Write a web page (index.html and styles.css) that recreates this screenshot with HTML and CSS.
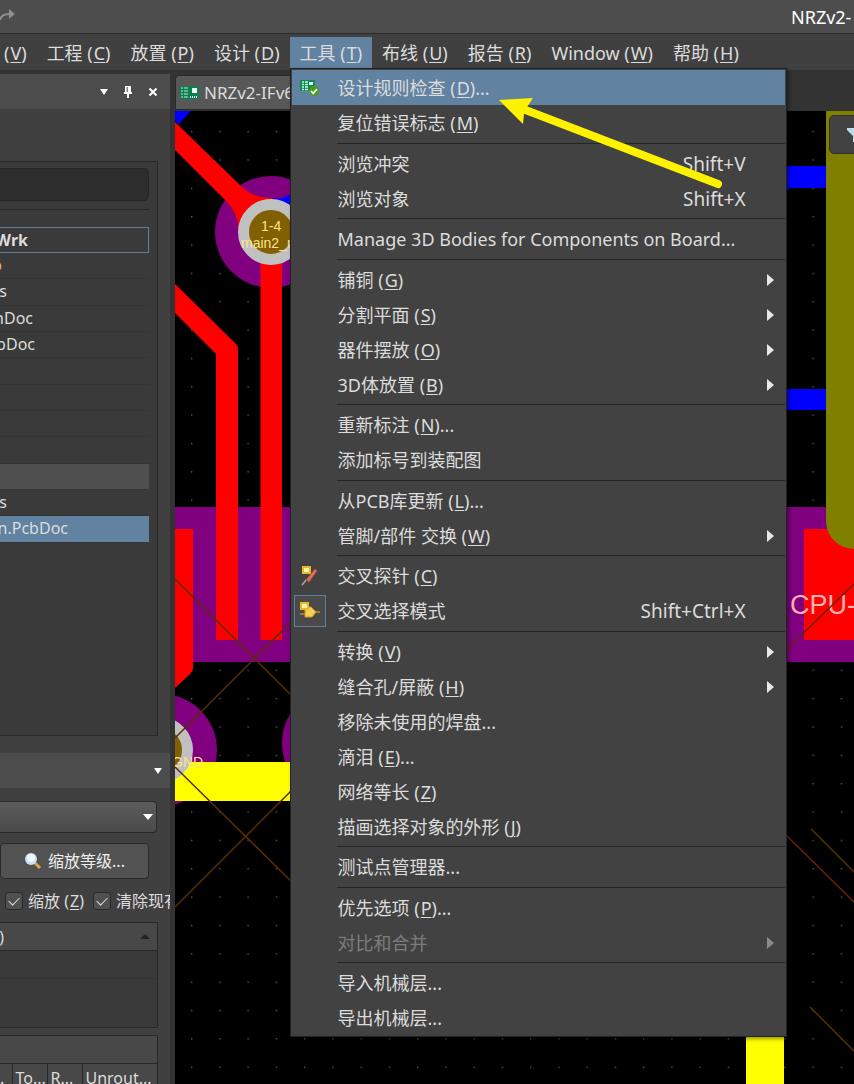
FILE: index.html
```html
<!DOCTYPE html>
<html lang="zh-CN">
<head>
<meta charset="utf-8">
<title>NRZv2-IFv6</title>
<link rel="stylesheet" href="styles.css">
</head>
<body>
<div class="app">
  <header class="titlebar">
    <svg class="redo" width="16" height="22" viewBox="0 0 16 22" fill="none" stroke="#8e8e8e" stroke-width="2"><path d="M0 20C1 15 5 14 10 14"/><path d="M9 9l6 5-6 5z" fill="#8e8e8e" stroke="none"/></svg>
    <span class="title">NRZv2-</span>
  </header>
  <nav class="menubar">
    <button class="top first">(<u>V</u>)</button>
    <button class="top">工程 (<u>C</u>)</button>
    <button class="top">放置 (<u>P</u>)</button>
    <button class="top">设计 (<u>D</u>)</button>
    <div class="open">
      <button class="top active">工具 (<u>T</u>)</button>
      <div class="menu">
        <div class="group">
          <button class="item hot"><span class="ico"><svg width="20" height="18" viewBox="0 0 20 18"><path d="M0 1h15v11H0z" fill="#0d8a56"/><path d="M2 3h2M2 5.500h2M2 8h2M2 10.500h2M5 3h3M5 5.500h3M5 8h3M5 10.500h3" stroke="#c9f0dc" stroke-width="1.300"/><path d="M9 3h4v3H9z" fill="#e8f6ee"/><circle cx="14" cy="12" r="5" fill="#4a9a1c"/><path d="M11 12l2.200 2.300L17 10" fill="none" stroke="#fff" stroke-width="1.800"/></svg></span><span>设计规则检查 (<u>D</u>)...</span></button>
          <button class="item"><span class="ico"></span><span>复位错误标志 (<u>M</u>)</span></button>
        </div>
        <div class="group">
          <button class="item"><span class="ico"></span><span>浏览冲突</span><kbd>Shift+V</kbd></button>
          <button class="item"><span class="ico"></span><span>浏览对象</span><kbd>Shift+X</kbd></button>
        </div>
        <div class="group">
          <button class="item"><span class="ico"></span><span>Manage 3D Bodies for Components on Board...</span></button>
        </div>
        <div class="group">
          <button class="item sub"><span class="ico"></span><span>铺铜 (<u>G</u>)</span></button>
          <button class="item sub"><span class="ico"></span><span>分割平面 (<u>S</u>)</span></button>
          <button class="item sub"><span class="ico"></span><span>器件摆放 (<u>O</u>)</span></button>
          <button class="item sub"><span class="ico"></span><span>3D体放置 (<u>B</u>)</span></button>
        </div>
        <div class="group">
          <button class="item"><span class="ico"></span><span>重新标注 (<u>N</u>)...</span></button>
          <button class="item"><span class="ico"></span><span>添加标号到装配图</span></button>
        </div>
        <div class="group">
          <button class="item"><span class="ico"></span><span>从PCB库更新 (<u>L</u>)...</span></button>
          <button class="item sub"><span class="ico"></span><span>管脚/部件 交换 (<u>W</u>)</span></button>
        </div>
        <div class="group">
          <button class="item"><span class="ico"><svg width="20" height="22" viewBox="0 0 20 22"><path d="M2 20l5-6" stroke="#aaa" stroke-width="1.500"/><path d="M6 15L15 4l2 2-8 11z" fill="#e0705e" stroke="#b04a3c"/><path d="M2 1h9v8H2z" fill="#e5b92c"/><path d="M4 3h5v4H4z" fill="#fff3a8"/></svg></span><span>交叉探针 (<u>C</u>)</span></button>
          <button class="item" aria-pressed="true"><span class="ico checked"><svg width="22" height="20" viewBox="0 0 22 20"><path d="M1 13h5M14 11h7" stroke="#c48c1c" stroke-width="1.500"/><path d="M6 6h6l5 5-4 5H6z" fill="#f5cf55" stroke="#c99a26"/><path d="M1 1h9v8H1z" fill="#e5b92c"/><path d="M3 3h5v4H3z" fill="#fff3a8"/></svg></span><span>交叉选择模式</span><kbd>Shift+Ctrl+X</kbd></button>
        </div>
        <div class="group">
          <button class="item sub"><span class="ico"></span><span>转换 (<u>V</u>)</span></button>
          <button class="item sub"><span class="ico"></span><span>缝合孔/屏蔽 (<u>H</u>)</span></button>
          <button class="item"><span class="ico"></span><span>移除未使用的焊盘...</span></button>
          <button class="item"><span class="ico"></span><span>滴泪 (<u>E</u>)...</span></button>
          <button class="item"><span class="ico"></span><span>网络等长 (<u>Z</u>)</span></button>
          <button class="item"><span class="ico"></span><span>描画选择对象的外形 (<u>J</u>)</span></button>
        </div>
        <div class="group">
          <button class="item"><span class="ico"></span><span>测试点管理器...</span></button>
        </div>
        <div class="group">
          <button class="item"><span class="ico"></span><span>优先选项 (<u>P</u>)...</span></button>
          <button class="item sub" disabled><span class="ico"></span><span>对比和合并</span></button>
        </div>
        <div class="group">
          <button class="item"><span class="ico"></span><span>导入机械层...</span></button>
          <button class="item"><span class="ico"></span><span>导出机械层...</span></button>
        </div>
        <svg class="pointer" width="230" height="100" viewBox="0 0 230 100"><path d="M5 11l34-2-6 9-3 7-1 10z" fill="#fff200"/><path d="M29 20L224 95" stroke="#fff200" stroke-width="8" stroke-linecap="round"/></svg>
      </div>
    </div>
    <button class="top">布线 (<u>U</u>)</button>
    <button class="top">报告 (<u>R</u>)</button>
    <button class="top">Window (<u>W</u>)</button>
    <button class="top">帮助 (<u>H</u>)</button>
  </nav>

  <div class="work">
    <aside class="side">
      <div class="strip">
        <svg width="8" height="6" viewBox="0 0 8 6"><path d="M0 0h8L4 6z" fill="#fff"/></svg>
        <svg width="10" height="12" viewBox="0 0 10 12"><path d="M2 0h6v6h1v2H1V6h1zM4 8h2v4H4z" fill="#fff"/><path d="M3.500 1h1.500v5H3.500z" fill="#888"/></svg>
        <svg width="10" height="10" viewBox="0 0 10 10"><path d="M1.500 1.500l7 7M8.500 1.500l-7 7" stroke="#fff" stroke-width="2"/></svg>
      </div>
      <div class="tree">
        <input class="search" type="text" aria-label="搜索">
        <ul class="rows">
          <li class="focus"><span class="cut c28">Wrk</span></li>
          <li class="orange"><span class="cut c2">o</span></li>
          <li><span class="cut c7">s</span></li>
          <li><span class="cut c33">nDoc</span></li>
          <li><span class="cut c35">bDoc</span></li>
          <li></li><li></li><li></li><li></li>
        </ul>
        <ul class="rows">
          <li class="section"></li>
          <li><span class="cut c7">s</span></li>
          <li class="selected"><span class="cut c68">n.PcbDoc</span></li>
        </ul>
      </div>
      <div class="strip low">
        <svg width="8" height="6" viewBox="0 0 8 6"><path d="M0 0h8L4 6z" fill="#fff"/></svg>
      </div>
      <div class="combo">
        <select aria-label="对象"><option></option></select>
        <svg width="10" height="6" viewBox="0 0 10 6"><path d="M0 0h10L5 6z" fill="#fff"/></svg>
      </div>
      <button class="zoom"><svg width="18" height="18" viewBox="0 0 18 18"><path d="M10 10l6 6" stroke="#e0a050" stroke-width="3"/><circle cx="7" cy="7" r="6" fill="#c5e0fa"/><circle cx="7" cy="6" r="4" fill="#f2f8ff"/></svg>缩放等级...</button>
      <div class="checks">
        <label><input type="checkbox" checked><span>缩放 (<u>Z</u>)</span></label>
        <label><input type="checkbox" checked>清除现有</label>
      </div>
      <div class="list">
        <div class="head"><span class="cut c4">)</span><svg width="10" height="5" viewBox="0 0 10 5"><path d="M0 5h10L5 0z" fill="#222"/></svg></div>
        <div class="line"></div>
      </div>
      <div class="list last">
        <div class="head"></div>
        <table><tr><th class="n1">.</th><th class="n2">To...</th><th class="n3">R...</th><th>Unrout...</th></tr></table>
      </div>
    </aside>
    <main class="doc">
      <div class="tabs"><button class="tab"><svg width="20" height="16" viewBox="0 0 20 16"><path d="M0 1h19v13H0z" fill="#0c7f50"/><path d="M1 3h2M1 6h2M1 9h2M1 12h2M4 3h4M4 6h4M4 9h4M4 12h4" stroke="#bfe8d2"/><path d="M12 3h5v5h-5z" fill="#f2faf5"/><path d="M10 12h8" stroke="#dff" stroke-width="2" stroke-dasharray="1 1"/></svg>NRZv2-IFv6</button></div>
      <div class="board">
        <svg width="679" height="973" viewBox="175 111 679 973">
          <defs><pattern id="dots" x="191" y="131" width="28.250" height="28.350" patternUnits="userSpaceOnUse"><rect width="1.300" height="1.300" fill="#666"/></pattern></defs>
          <rect x="175" y="111" width="679" height="973" fill="#000"/>
          <rect x="175" y="111" width="679" height="973" fill="url(#dots)"/>
          <path d="M175 111h16l-12 13-4-3z" fill="#00f"/>
          <circle cx="271" cy="232" r="56" fill="#800080"/>
          <path d="M271 199l11-1 9-4v20h-20z" fill="#00f"/>
          <path d="M175 122L240 185Q252 198 272 198V232H239Q238 212 225 200L175 150z" fill="#f00"/>
          <path d="M175 507h116v155H175z" fill="#800080"/>
          <path d="M260.500 250h21.500v390h-21.500zM175 284L236 344q2 2 2 6V640H216V354L175 313zM175 529h18v139q0 3-3 6l-15 14z" fill="#f00"/>
          <circle cx="271" cy="232" r="27.500" fill="#806000" stroke="#c0c0c0" stroke-width="11"/>
          <g fill="#ffe08c" font-family="Liberation Sans Narrow, Liberation Sans, sans-serif" font-size="14"><text x="261" y="231">1-4</text><text x="241" y="248">main2_r</text></g>
          <circle cx="161" cy="750" r="56" fill="#800080"/><circle cx="338" cy="743" r="56" fill="#800080"/>
          <path d="M175 762h116v39H175z" fill="#ff0"/>
          <circle cx="160" cy="750" r="27.500" fill="#806000" stroke="#c0c0c0" stroke-width="11"/>
          <text x="172" y="767" fill="#ffe08c" font-family="Liberation Sans Narrow, Liberation Sans, sans-serif" font-size="14">GND</text>
          <path d="M175 579L291 695M175 738L291 622M175 767L291 881M175 907L291 791" stroke="#5a2c00" stroke-width="1.500"/>
          <path d="M786 166h40v22h-36l-4 3zM786 389h40v21h-40z" fill="#00f"/>
          <path d="M786 507h68v155h-68z" fill="#800080"/><path d="M804 529h50v111h-50z" fill="#f00"/>
          <path d="M826 111h28v438a28 28 0 0 1-28-28z" fill="#808000"/>
          <text x="790" y="614" fill="#ffb0b0" font-family="Liberation Sans Narrow, Liberation Sans, sans-serif" font-size="27">CPU-</text>
          <path d="M786 650L854 584" stroke="#6a2400" stroke-width="1.500"/>
          <path d="M786 835L854 902" stroke="#6a2400" stroke-width="1.500"/><path d="M811 829L854 872M810 1007L854 1051" stroke="#5a3000" stroke-width="1.500"/>
          <path d="M746 1030h38v54h-38z" fill="#ff0"/>
        </svg>
        <button class="filter" aria-label="过滤器"><svg width="16" height="16" viewBox="0 0 16 16"><path d="M0 1h16v2l-6 6v6H6V9L0 3z" fill="#b8dcec"/></svg></button>
      </div>
    </main>
  </div>
</div>
</body>
</html>
```

FILE: styles.css
```css
* { box-sizing: border-box; }
body {
  margin: 0;
  background: #333;
  color: #dcdcdc;
  font: 18px/24px "Noto Sans", "Noto Sans CJK SC", sans-serif;
}
button, input, select { font: inherit; color: inherit; margin: 0; padding: 0; border: 0; background: none; }
button { white-space: nowrap; text-align: left; }
ul { list-style: none; margin: 0; padding: 0; }
u { margin-left: 1px; text-underline-offset: 2px; text-decoration-thickness: 1px; }
svg { display: block; flex: none; }
.app { display: flex; flex-direction: column; min-height: 100vh; overflow: hidden; }

.titlebar { display: flex; height: 34px; background: #4d4d4d; border-bottom: 1px solid #2c2c2c; }
.title { flex: none; width: 63px; margin-left: auto; padding-top: 5px; color: #fff; white-space: nowrap; }

.menubar { display: flex; height: 36px; padding-top: 3px; background: #404040; }
.top { height: 31px; padding: 0 10px; }
.top.first { padding-left: 4px; }
.open { position: relative; }
.active { background: #6282a2; }
.menu {
  position: absolute; z-index: 2; top: 31px; left: 0; width: 497px;
  padding: 1px; background: #424242; border: 1px solid #222;
  box-shadow: 2px 2px 4px #0006;
}
.group { position: relative; padding-bottom: 3px; }
.group + .group { padding-top: 3px; }
.group:nth-child(even) { padding-bottom: 2px; }
.group:last-of-type { padding-bottom: 0; }
.group + .group::before { content: ""; position: absolute; top: 0; left: 45px; right: 0; border-top: 1px solid #262626; }
.item { display: flex; align-items: center; width: 100%; height: 35px; padding-right: 39px; }
.item kbd { margin-left: auto; font: inherit; font-size: 19px; }
.hot { background: #6282a2; }
.ico { display: flex; flex: none; align-items: center; justify-content: center; width: 32px; height: 32px; margin: 0 12px 0 2px; }
.checked { background: #4a4a4a; border: 1px solid #5f7f9f; }
.sub { padding-right: 11px; }
.sub::after { content: ""; margin-left: auto; border: 6px solid transparent; border-left: 7px solid #e8e8e8; border-right: 0; }
.item:disabled { color: #7c7c7c; }
.item:disabled::after { border-left-color: #8a8a8a; }
.pointer { position: absolute; top: 20px; left: 203px; }

.work { display: flex; flex: 1; }
.side { display: flex; flex: none; flex-direction: column; width: 170px; margin-top: 4px; overflow: hidden; background: #404040; font-size: 16px; }
.strip { display: flex; align-items: center; justify-content: flex-end; gap: 14px; height: 35px; padding-right: 11px; background: #4d4d4d; }
.strip svg { margin-right: 1px; }
.strip.low { margin-top: 17px; padding-right: 7px; }
.tree { min-height: 575px; margin: 52px 12px 0 0; padding: 6px 8px 0 0; background: #3a3a3a; border: solid #282828; border-width: 1px 1px 1px 0; }
.search { display: block; width: 100%; height: 33px; background: #2d2d2d; border: 1px solid #262626; border-left: 0; border-radius: 0 5px 5px 0; }
.search + .rows { margin-top: 8px; padding-top: 17px; border-top: 1px solid #282828; }
.rows li { height: 26px; border-bottom: 1px solid #353535; }
.rows li:nth-child(3n) { height: 27px; }
.rows .focus { border: 1px solid #5f7f9f; border-left: 0; font-weight: 700; }
.rows .section { background: #4f4f4f; }
.rows .selected { background: #6282a2; }
.orange { color: #e8b070; }
.cut { display: flex; justify-content: flex-end; overflow: hidden; white-space: nowrap; }
.c2 { width: 2px; }
.c4 { width: 4px; }
.c7 { width: 7px; }
.c28 { width: 28px; }
.c33 { width: 33px; }
.c35 { width: 35px; }
.c68 { width: 68px; }
.combo { position: relative; height: 32px; margin: 13px 13px 0 0; }
.combo select { width: 100%; height: 100%; appearance: none; background: linear-gradient(#5c5c5c, #4a4a4a); border: 1px solid #292929; border-left: 0; border-radius: 0 4px 4px 0; }
.combo svg { position: absolute; top: 13px; right: 4px; }
.zoom { display: flex; align-items: center; justify-content: center; gap: 6px; height: 36px; margin: 10px 21px 0 0; background: #525252; border: 1px solid #292929; border-radius: 4px; color: #eee; }
.checks { display: flex; gap: 9px; margin: 10px 0 0 5px; white-space: nowrap; }
.checks label { display: flex; align-items: center; }
.checks input { position: relative; flex: none; width: 18px; height: 18px; margin-right: 5px; appearance: none; background: #505050; border: 1px solid #282828; border-radius: 3px; }
.checks input::after { content: ""; position: absolute; top: 2px; left: 5px; width: 5px; height: 9px; border: solid #ddd; border-width: 0 1px 1px 0; transform: rotate(45deg); }
.list { height: 106px; margin: 9px 12px 0 0; background: #3a3a3a; border: solid #282828; border-width: 1px 1px 1px 0; }
.head { display: flex; align-items: center; justify-content: space-between; height: 28px; padding-right: 7px; background: #484848; border-bottom: 1px solid #282828; }
.line { height: 28px; border-bottom: 1px solid #353535; }
.last { flex: 1; height: auto; margin-top: 7px; overflow: hidden; background: #484848; }
.last table { width: 100%; table-layout: fixed; border-collapse: collapse; }
.last th { height: 26px; padding: 2px 0 0 3px; border-left: 1px solid #282828; font-weight: 400; text-align: left; white-space: nowrap; }
.last .n1 { width: 12px; padding-left: 0; border-left: 0; }
.last .n2, .last .n3 { width: 35px; }

.doc { flex: 1; min-width: 0; padding-left: 5px; }
.tabs { height: 41px; padding-top: 5px; }
.tab { display: flex; align-items: center; gap: 4px; width: 180px; height: 35px; padding-left: 4px; background: #585858; border: 1px solid #292929; border-radius: 4px 4px 0 0; font-size: 17px; }
.board { position: relative; overflow: hidden; background: #000; }
.filter { position: absolute; top: 4px; left: 654px; display: flex; align-items: center; width: 60px; height: 39px; padding-left: 17px; background: #424242; border: 1px solid #303030; border-radius: 5px; }
```
